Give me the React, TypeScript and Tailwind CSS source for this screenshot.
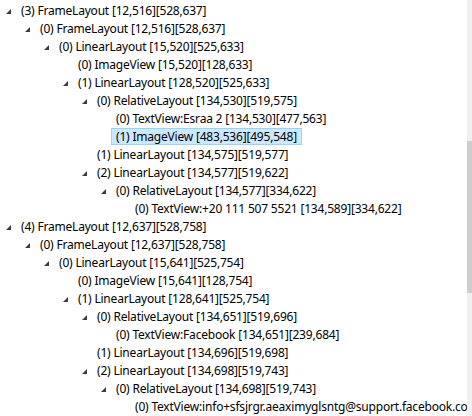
type Node = { level: number; label: string; open?: boolean; selected?: boolean };

const rows: Node[] = [
  { level: 0, label: "(3) FrameLayout [12,516][528,637]", open: true },
  { level: 1, label: "(0) FrameLayout [12,516][528,637]", open: true },
  { level: 2, label: "(0) LinearLayout [15,520][525,633]", open: true },
  { level: 3, label: "(0) ImageView [15,520][128,633]" },
  { level: 3, label: "(1) LinearLayout [128,520][525,633]", open: true },
  { level: 4, label: "(0) RelativeLayout [134,530][519,575]", open: true },
  { level: 5, label: "(0) TextView:Esraa 2 [134,530][477,563]" },
  { level: 5, label: "(1) ImageView [483,536][495,548]", selected: true },
  { level: 4, label: "(1) LinearLayout [134,575][519,577]" },
  { level: 4, label: "(2) LinearLayout [134,577][519,622]", open: true },
  { level: 5, label: "(0) RelativeLayout [134,577][334,622]", open: true },
  { level: 6, label: "(0) TextView:+20 111 507 5521 [134,589][334,622]" },
  { level: 0, label: "(4) FrameLayout [12,637][528,758]", open: true },
  { level: 1, label: "(0) FrameLayout [12,637][528,758]", open: true },
  { level: 2, label: "(0) LinearLayout [15,641][525,754]", open: true },
  { level: 3, label: "(0) ImageView [15,641][128,754]" },
  { level: 3, label: "(1) LinearLayout [128,641][525,754]", open: true },
  { level: 4, label: "(0) RelativeLayout [134,651][519,696]", open: true },
  { level: 5, label: "(0) TextView:Facebook [134,651][239,684]" },
  { level: 4, label: "(1) LinearLayout [134,696][519,698]" },
  { level: 4, label: "(2) LinearLayout [134,698][519,743]", open: true },
  { level: 5, label: "(0) RelativeLayout [134,698][519,743]", open: true },
  { level: 6, label: "(0) TextView:info+sfsjrgr.aeaximyglsntg@support.facebook.com [134,710][519,743]" },
];

function Row({ node }: { node: Node }) {
  return (
    <div className="flex h-[18px] items-center whitespace-nowrap" style={{ paddingLeft: 6 + node.level * 19 }}>
      <span className="flex w-[10px] shrink-0 items-center">
        {node.open && (
          <svg width="5" height="5" viewBox="0 0 5 5" className="mt-[3px]">
            <polygon points="5,0 5,5 0,5" fill="#3c3c3c" />
          </svg>
        )}
      </span>
      <span
        className={
          node.selected
            ? "h-[17px] border border-[#99d1ff] bg-[#cce8ff] px-[4px] leading-[15px]"
            : "h-[17px] border border-transparent px-[4px] leading-[15px]"
        }
      >
        {node.label}
      </span>
    </div>
  );
}

export default function App() {
  return (
    <div
      className="flex h-[416px] w-[472px] bg-white text-[12px] tracking-[-0.2px] text-black"
      style={{ fontFamily: '"Noto Sans", "Open Sans", sans-serif' }}
    >
      <div className="flex-1 overflow-hidden pt-[1px]">
        {rows.map((r, i) => (
          <Row key={i} node={r} />
        ))}
      </div>
      <div className="flex w-[5px] flex-col bg-[#f0f0f0]">
        <div className="h-[141px]" />
        <div className="h-[152px] bg-[#cdcdcd]" />
      </div>
    </div>
  );
}
